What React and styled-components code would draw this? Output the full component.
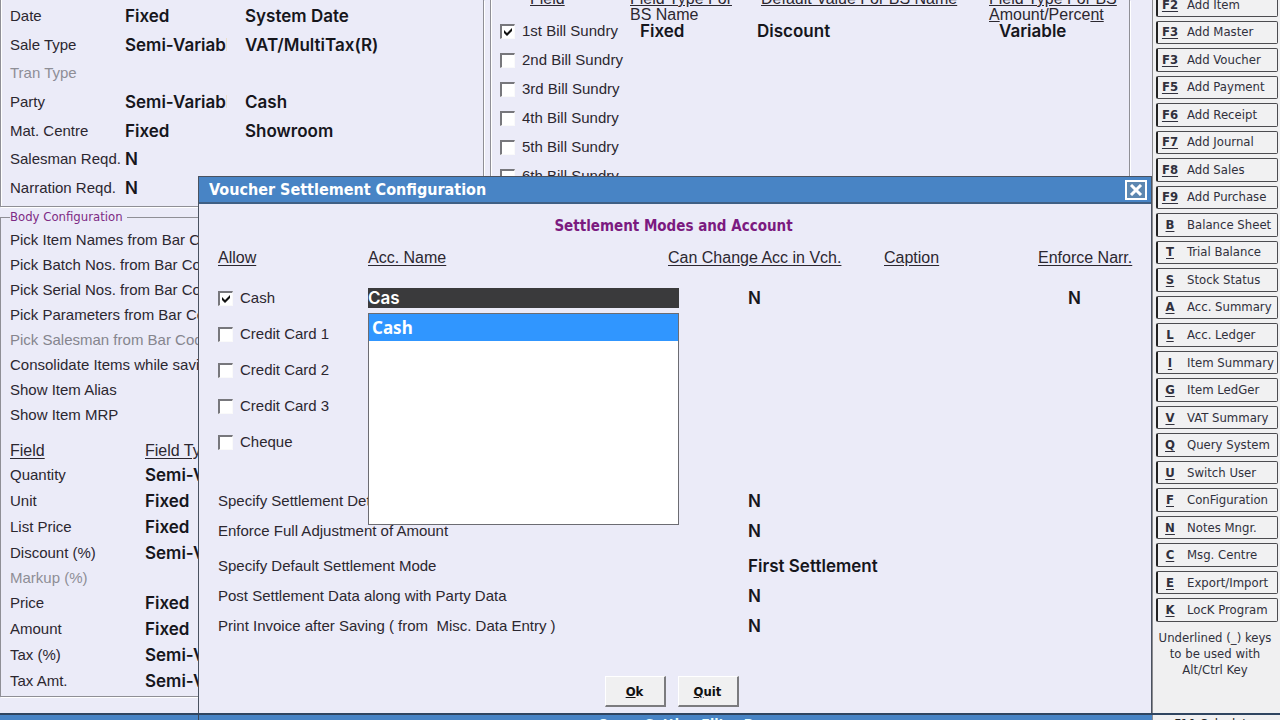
import React from "react";
import styled, { createGlobalStyle } from "styled-components";

const ink = "#2b2730";
const line = "#8f8f96";
const blue = "#4884c5";
const surface = "#ebebf8";
const arial = '"Liberation Sans", Arial, sans-serif';
const wide = 'Inter, "Liberation Sans", sans-serif';
const tahoma = '"DejaVu Sans Condensed", "Noto Sans", Tahoma, sans-serif';

const GlobalStyle = createGlobalStyle`
  *, *::before, *::after { box-sizing: border-box; }
  body {
    margin: 0;
    background: ${surface};
    color: ${ink};
    font: 15px/18px ${arial};
  }
  button, input { font: inherit; color: inherit; }
`;

const Shell = styled.div`
  display: flex;
  flex-direction: column;
  height: 100vh;
  overflow: hidden;
`;

const Workspace = styled.div`
  flex: 1;
  min-height: 0;
  display: grid;
  grid-template-columns: minmax(0, 1fr) 128px;
`;

const Desk = styled.main`
  position: relative;
  min-height: 0;
  overflow: hidden;
  display: grid;
  grid-template-columns: 484px minmax(0, 1fr);
  gap: 6px;
  padding-right: 22px;
`;

const LeftColumn = styled.div`
  display: flex;
  flex-direction: column;
  gap: 2px;
`;

const Panel = styled.section`
  border: 1px solid ${line};
  border-top: 0;
  box-shadow: 1px 1px 0 #fff, inset 1px 0 0 #fff;
`;

const HeaderPanel = styled(Panel)`
  height: 207px;
  padding: 2px 9px 0;
`;

const HeaderRows = styled.dl`
  margin: 0;
  height: 200px;
  display: grid;
  grid-auto-rows: 1fr;
`;

const HeaderRow = styled.div`
  display: grid;
  grid-template-columns: 115px 102px minmax(0, 1fr);
  align-items: center;
  color: ${(p) => (p.$muted ? "#8e8e96" : ink)};
  dt, dd { margin: 0; white-space: nowrap; }
  dd + dd { padding-left: 18px; }
`;

const Value = styled.span`
  display: block;
  overflow: hidden;
  font: 600 17px/20px ${wide};
  color: #16161c;
  white-space: nowrap;
`;

const BodyPanel = styled.fieldset`
  margin: 0;
  min-width: 0;
  height: 488px;
  padding: 2px 9px 0;
  border: 1px solid ${line};
  box-shadow: 1px 1px 0 #fff;
`;

const BodyLegend = styled.legend`
  padding: 0 4px 0 0;
  font: 13px/16px ${tahoma};
  color: #7d2a84;
`;

const PickList = styled.ul`
  list-style: none;
  margin: 0 0 12px;
  padding: 0;
  line-height: 25px;
  white-space: nowrap;
`;

const PickItem = styled.li`
  color: ${(p) => (p.$muted ? "#85858e" : ink)};
`;

const FieldTable = styled.table`
  width: 100%;
  height: 255px;
  table-layout: fixed;
  border-collapse: collapse;
  text-align: left;
  th, td { padding: 0; font-weight: normal; white-space: nowrap; }
  thead th {
    height: 23px;
    font-size: 16px;
    text-decoration: underline;
    text-underline-offset: 2px;
  }
  th:first-child { width: 135px; }
`;

const FieldLine = styled.tr`
  color: ${(p) => (p.$muted ? "#8e8e96" : ink)};
`;

const SundryPanel = styled(Panel)`
  padding: 0 4px 0 9px;
`;

const SundryTable = styled.table`
  width: 100%;
  margin-top: -9px;
  table-layout: fixed;
  border-collapse: collapse;
  text-align: left;
  th, td { padding: 0; font-weight: normal; line-height: 16px; vertical-align: top; white-space: nowrap; }
  thead th { height: 32px; font-size: 16px; }
  tbody td { height: 29px; }
  tbody td + td { padding-left: 10px; }
  tbody td:nth-child(3) { padding-left: 0; }
  tbody ${Value} { line-height: 16px; }
`;

const Indent = styled.div`
  padding-left: ${(p) => p.$by}px;
`;

const CheckLabel = styled.label`
  display: flex;
  align-items: center;
  gap: 7px;
  line-height: 16px;
`;

const BoxStack = styled.span`
  display: inline-grid;
  width: 15px;
  height: 15px;
  > * { grid-area: 1 / 1; }
`;

const Box = styled.input`
  appearance: none;
  width: 15px;
  height: 15px;
  margin: 0;
  background: #fff;
  border: 1px solid #fafafa;
  border-top: 2px solid #77777c;
  border-left: 2px solid #77777c;
`;

const Tick = styled.svg`
  width: 15px;
  height: 15px;
  pointer-events: none;
`;

function Check({ children, checked }) {
  return (
    <CheckLabel>
      <BoxStack>
        <Box type="checkbox" defaultChecked={checked} />
        {checked && (
          <Tick viewBox="0 0 15 15" aria-hidden="true">
            <path d="M4 6v3l3 3 5-5V4L7 9z" fill="#111" />
          </Tick>
        )}
      </BoxStack>
      {children}
    </CheckLabel>
  );
}

const Dialog = styled.section`
  position: absolute;
  top: 176px;
  right: 0;
  bottom: 0;
  left: 198px;
  display: flex;
  flex-direction: column;
  background: ${surface};
  border: 1px solid #4a5260;
  border-bottom: 0;
`;

const TitleBar = styled.header`
  display: flex;
  align-items: center;
  justify-content: space-between;
  height: 27px;
  padding: 0 4px 0 10px;
  background: ${blue};
  border-bottom: 2px solid #3f5f84;
`;

const Title = styled.h1`
  margin: 0;
  font: 700 16px/20px ${tahoma};
  color: #fff;
`;

const Close = styled.button`
  display: grid;
  place-items: center;
  width: 22px;
  height: 20px;
  padding: 0;
  background: #5d87b0;
  border: 2px solid #fff;
  svg { width: 14px; height: 12px; }
`;

const DialogBody = styled.div`
  flex: 1;
  padding: 12px 18px 0 19px;
`;

const Caption = styled.h2`
  margin: 0 0 10px;
  padding-right: 4px;
  text-align: center;
  font: 700 15px/20px ${tahoma};
  color: #7b1a80;
`;

const ModeTable = styled.table`
  width: 100%;
  table-layout: fixed;
  border-collapse: collapse;
  text-align: left;
  th, td { padding: 0; font-weight: normal; white-space: nowrap; }
  thead th {
    height: 34px;
    padding-bottom: 10px;
    font-size: 16px;
    text-decoration: underline;
    text-underline-offset: 2px;
  }
  tbody td { height: 36px; }
`;

const Combo = styled.div`
  position: relative;
  width: 311px;
  height: 20px;
`;

const ComboInput = styled.input`
  display: block;
  width: 100%;
  height: 20px;
  padding: 0;
  border: 0;
  outline: 0;
  background: #3a3a3c;
  color: #fff;
  font: 600 17px/20px ${wide};
`;

const Menu = styled.ul`
  position: absolute;
  z-index: 1;
  top: 25px;
  left: 0;
  width: 100%;
  height: 212px;
  margin: 0;
  padding: 0;
  list-style: none;
  background: #fff;
  border: 1px solid #6c6c72;
`;

const MenuItem = styled.li`
  padding: 0 3px;
  background: #3096ff;
  color: #fff;
  font: 700 17px/27px "Noto Sans", sans-serif;
`;

const Options = styled.div`
  display: flex;
  flex-direction: column;
  gap: 5px;
  margin-top: 26px;
`;

const OptionGroup = styled.dl`
  margin: 0;
`;

const Option = styled.div`
  display: grid;
  grid-template-columns: 530px minmax(0, 1fr);
  align-items: center;
  height: 30px;
  white-space: pre;
  dt, dd { margin: 0; }
`;

const Actions = styled.footer`
  display: flex;
  justify-content: center;
  gap: 12px;
  margin-top: 35px;
  padding-right: 8px;
`;

const ActionButton = styled.button`
  width: 61px;
  height: 31px;
  padding: 2px 0 0;
  background: #f0f0f1;
  border: 1px solid #fff;
  border-right: 2px solid #7b7b7e;
  border-bottom: 2px solid #7b7b7e;
  color: #111;
  font: 700 13px/16px ${tahoma};
`;

const Sidebar = styled.aside`
  min-height: 0;
  padding: 0 2px 0 3px;
  background: #f0f0f1;
  border-left: 1px solid #8c8c90;
  color: #30303c;
  font: 13px/16px ${tahoma};
`;

const KeyList = styled.nav`
  height: 629px;
  margin-top: -7px;
  display: grid;
  grid-template-columns: minmax(0, 1fr);
  grid-auto-rows: 1fr;
  gap: 4px;
`;

const KeyButton = styled.button`
  display: grid;
  grid-template-columns: 24px minmax(0, 1fr);
  column-gap: 5px;
  align-items: center;
  min-height: 0;
  padding: 0;
  background: #f1f1f2;
  border: 1px solid #4c4c50;
  border-left: 2px solid #222;
  border-radius: 2px;
  text-align: left;
  white-space: nowrap;
  font: 13px/16px ${tahoma};
`;

const Key = styled.u`
  text-align: center;
  font-weight: 700;
  text-underline-offset: 2px;
`;

const KeyNote = styled.p`
  margin: 8px 0 0;
  padding-right: 4px;
  text-align: center;
  white-space: nowrap;
`;

const StatusBar = styled.footer`
  display: grid;
  grid-template-columns: 198px minmax(0, 1fr) 128px;
  height: 24px;
  margin-bottom: -17px;
  border-top: 2px solid #2f4560;
  background: ${blue};
  color: #e8ffff;
  text-align: center;
  font: 700 14px/18px ${tahoma};
`;

const StatusCell = styled.div`
  border-left: 1px solid #3c4654;
`;

const StatusKey = styled.div`
  background: #f0f0f1;
  border-left: 1px solid #8c8c90;
  color: #222;
  font: 13px/18px ${tahoma};
`;

const headerRows = [
  ["Date", "Fixed", "System Date"],
  ["Sale Type", "Semi-Variable", "VAT/MultiTax(R)"],
  ["Tran Type", "", "", true],
  ["Party", "Semi-Variable", "Cash"],
  ["Mat. Centre", "Fixed", "Showroom"],
  ["Salesman Reqd.", "N", ""],
  ["Narration Reqd.", "N", ""],
];

const picks = [
  "Pick Item Names from Bar Code",
  "Pick Batch Nos. from Bar Code",
  "Pick Serial Nos. from Bar Code",
  "Pick Parameters from Bar Code",
  "Pick Salesman from Bar Code",
  "Consolidate Items while saving",
  "Show Item Alias",
  "Show Item MRP",
];

const fields = [
  ["Quantity", "Semi-Variable"],
  ["Unit", "Fixed"],
  ["List Price", "Fixed"],
  ["Discount (%)", "Semi-Variable"],
  ["Markup (%)", ""],
  ["Price", "Fixed"],
  ["Amount", "Fixed"],
  ["Tax (%)", "Semi-Variable"],
  ["Tax Amt.", "Semi-Variable"],
];

const sundries = ["1st", "2nd", "3rd", "4th", "5th", "6th"];
const modes = ["Cash", "Credit Card 1", "Credit Card 2", "Credit Card 3", "Cheque"];

const optionGroups = [
  [
    ["Specify Settlement Details", "N"],
    ["Enforce Full Adjustment of Amount", "N"],
  ],
  [
    ["Specify Default Settlement Mode", "First Settlement"],
    ["Post Settlement Data along with Party Data", "N"],
    ["Print Invoice after Saving ( from  Misc. Data Entry )", "N"],
  ],
];

const keys = [
  ["F2", "Add Item"], ["F3", "Add Master"], ["F3", "Add Voucher"], ["F5", "Add Payment"],
  ["F6", "Add Receipt"], ["F7", "Add Journal"], ["F8", "Add Sales"], ["F9", "Add Purchase"],
  ["B", "Balance Sheet"], ["T", "Trial Balance"], ["S", "Stock Status"], ["A", "Acc. Summary"],
  ["L", "Acc. Ledger"], ["I", "Item Summary"], ["G", "Item LedGer"], ["V", "VAT Summary"],
  ["Q", "Query System"], ["U", "Switch User"], ["F", "ConFiguration"], ["N", "Notes Mngr."],
  ["C", "Msg. Centre"], ["E", "Export/Import"], ["K", "LocK Program"],
];

export default function App() {
  return (
    <Shell>
      <GlobalStyle />
      <Workspace>
        <Desk>
          <LeftColumn>
            <HeaderPanel>
              <HeaderRows>
                {headerRows.map(([name, type, value, muted]) => (
                  <HeaderRow key={name} $muted={muted}>
                    <dt>{name}</dt>
                    <dd><Value>{type}</Value></dd>
                    <dd><Value>{value}</Value></dd>
                  </HeaderRow>
                ))}
              </HeaderRows>
            </HeaderPanel>
            <BodyPanel>
              <BodyLegend>Body Configuration</BodyLegend>
              <PickList>
                {picks.map((text, i) => (
                  <PickItem key={text} $muted={i === 4}>{text}</PickItem>
                ))}
              </PickList>
              <FieldTable>
                <thead>
                  <tr><th>Field</th><th>Field Type</th></tr>
                </thead>
                <tbody>
                  {fields.map(([name, type]) => (
                    <FieldLine key={name} $muted={!type}>
                      <td>{name}</td>
                      <td><Value>{type}</Value></td>
                    </FieldLine>
                  ))}
                </tbody>
              </FieldTable>
            </BodyPanel>
          </LeftColumn>

          <SundryPanel>
            <SundryTable>
              <colgroup>
                <col style={{ width: 130 }} />
                <col style={{ width: 127 }} />
                <col />
                <col style={{ width: 136 }} />
              </colgroup>
              <thead>
                <tr>
                  <th><Indent $by={30}><u>Field</u></Indent></th>
                  <th><u>Field Type For</u><br />BS Name</th>
                  <th><Indent $by={4}><u>Default Value For BS Name</u></Indent></th>
                  <th><u>Field Type For BS</u><br /><u>A</u>mount/Perce<u>nt</u></th>
                </tr>
              </thead>
              <tbody>
                {sundries.map((n, i) => (
                  <tr key={n}>
                    <td><Check checked={i === 0}>{n} Bill Sundry</Check></td>
                    <td>{i === 0 && <Value>Fixed</Value>}</td>
                    <td>{i === 0 && <Value>Discount</Value>}</td>
                    <td>{i === 0 && <Value>Variable</Value>}</td>
                  </tr>
                ))}
              </tbody>
            </SundryTable>
          </SundryPanel>

          <Dialog role="dialog" aria-labelledby="dialog-title">
            <TitleBar>
              <Title id="dialog-title">Voucher Settlement Configuration</Title>
              <Close type="button" aria-label="Close">
                <svg viewBox="0 0 14 12" aria-hidden="true">
                  <path d="M2 1l10 10M12 1L2 11" stroke="#fff" strokeWidth="3" />
                </svg>
              </Close>
            </TitleBar>
            <DialogBody>
              <Caption>Settlement Modes and Account</Caption>
              <ModeTable>
                <colgroup>
                  <col style={{ width: 150 }} />
                  <col style={{ width: 300 }} />
                  <col style={{ width: 216 }} />
                  <col />
                  <col style={{ width: 95 }} />
                </colgroup>
                <thead>
                  <tr>
                    <th>Allow</th>
                    <th>Acc. Name</th>
                    <th>Can Change Acc in Vch.</th>
                    <th>Caption</th>
                    <th>Enforce Narr.</th>
                  </tr>
                </thead>
                <tbody>
                  {modes.map((mode, i) => (
                    <tr key={mode}>
                      <td><Check checked={i === 0}>{mode}</Check></td>
                      <td>
                        {i === 0 && (
                          <Combo>
                            <ComboInput aria-label="Account name" defaultValue="Cas" />
                            <Menu role="listbox">
                              <MenuItem role="option" aria-selected="true">Cash</MenuItem>
                            </Menu>
                          </Combo>
                        )}
                      </td>
                      <td>{i === 0 && <Indent $by={80}><Value>N</Value></Indent>}</td>
                      <td />
                      <td>{i === 0 && <Indent $by={30}><Value>N</Value></Indent>}</td>
                    </tr>
                  ))}
                </tbody>
              </ModeTable>
              <Options>
                {optionGroups.map((group, i) => (
                  <OptionGroup key={i}>
                    {group.map(([name, value]) => (
                      <Option key={name}>
                        <dt>{name}</dt>
                        <dd><Value>{value}</Value></dd>
                      </Option>
                    ))}
                  </OptionGroup>
                ))}
              </Options>
              <Actions>
                <ActionButton type="button"><u>O</u>k</ActionButton>
                <ActionButton type="button"><u>Q</u>uit</ActionButton>
              </Actions>
            </DialogBody>
          </Dialog>
        </Desk>

        <Sidebar>
          <KeyList>
            {keys.map(([key, label]) => (
              <KeyButton type="button" key={label}>
                <Key>{key}</Key>
                <span>{label}</span>
              </KeyButton>
            ))}
          </KeyList>
          <KeyNote>
            Underlined (_) keys<br />to be used with<br />Alt/Ctrl Key
          </KeyNote>
        </Sidebar>
      </Workspace>
      <StatusBar>
        <div />
        <StatusCell>Query Setting Filter P</StatusCell>
        <StatusKey>F10 Calculator</StatusKey>
      </StatusBar>
    </Shell>
  );
}
